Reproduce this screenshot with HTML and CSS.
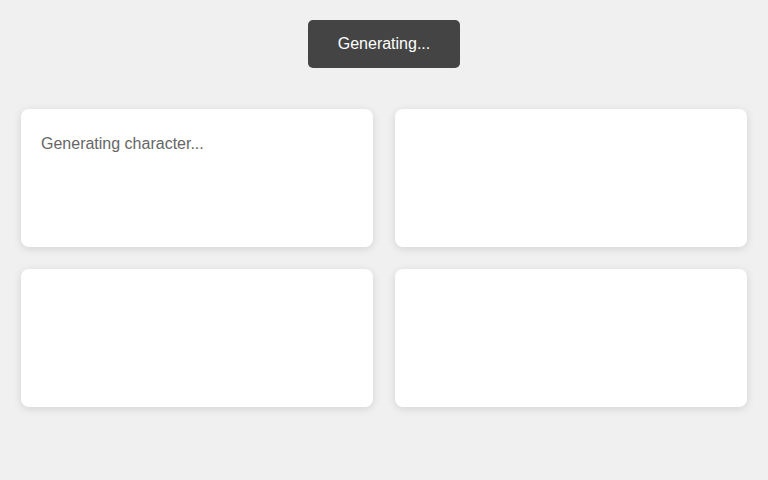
FILE: index.html
```html
<!DOCTYPE html>
<html>
	<head>
		<meta charset="utf-8">
		<title>Character Generator</title>
		<link rel="stylesheet" href="styles.css">
	</head>
	<body>
		<div class="top">
			<button type="button" class="gen-btn">Generating...</button>
		</div>
		<div class="grid">
			<div class="card"><p class="status">Generating character...</p></div>
			<div class="card"></div>
			<div class="card"></div>
			<div class="card"></div>
		</div>
	</body>
</html>
```

FILE: styles.css
```css
body {
	margin: 0;
	padding: 20px;
	background-color: #f0f0f0;
	font-family: "Liberation Sans", Arial, sans-serif;
}
.top {
	display: flex;
	justify-content: center;
	margin-bottom: 41px;
}
.gen-btn {
	font-family: inherit;
	font-size: 16px;
	color: #fff;
	background-color: #444;
	border: none;
	border-radius: 5px;
	padding: 15px 30px;
	outline: none;
}
.grid {
	display: grid;
	grid-template-columns: 1fr 1fr;
	gap: 22px;
	padding: 0 1px;
}
.card {
	background-color: #fff;
	border-radius: 8px;
	box-shadow: 0 2px 8px rgba(0,0,0,.12);
	padding: 20px;
	min-height: 98px;
}
.status {
	margin: 0;
	color: #666;
	font-size: 16px;
	line-height: 1.85;
}
```
